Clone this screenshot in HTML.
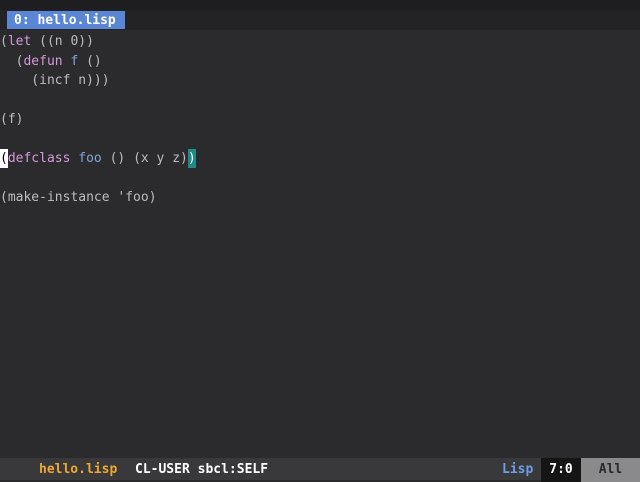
<!DOCTYPE html><html><head><style>
body{margin:0;width:640px;height:480px;background:#2b2a2d;overflow:hidden;font-family:"DejaVu Sans Mono","Liberation Mono",monospace;font-size:13px;color:#bdbdbd;position:relative}
.top{position:absolute;top:0;left:0;width:640px;height:10px;background:#1e1e20}
.tabs{position:absolute;top:10px;left:0;width:640px;height:20px;background:#232325}
.tab{position:absolute;left:7px;top:1px;width:118px;height:18px;background:#5a86d6;color:#fff;font-weight:bold;line-height:20px;padding-left:7px;box-sizing:border-box}
pre{position:absolute;top:32px;left:0;margin:0;font:inherit;line-height:19.5px}
.k{color:#d49ad8}.f{color:#7fa7d8}
.cur{background:#fff;color:#000;display:inline-block;height:19px;vertical-align:top}.m{background:#1f8a86;color:#fff;display:inline-block;height:19px;vertical-align:top}
.st{position:absolute;top:458px;left:0;width:640px;height:22px;background:#39383b;line-height:24px;font-weight:bold;color:#fff}
</style></head><body>
<div class="top"></div>
<div class="tabs"><div class="tab">0: hello.lisp</div></div>
<pre>(<span class="k">let</span> ((n 0))
  (<span class="k">defun</span> <span class="f">f</span> ()
    (incf n)))

(f)

<span class="cur">(</span><span class="k">defclass</span> <span class="f">foo</span> () (x y z)<span class="m">)</span>

(make-instance 'foo)</pre>
<div class="st"><span style="position:absolute;left:39px;color:#f0a830">hello.lisp</span><span style="position:absolute;left:135px">CL-USER sbcl:SELF</span><span style="position:absolute;left:502px;color:#6f9fe8">Lisp</span><span style="position:absolute;left:541px;width:40px;background:#151515;text-align:center">7:0</span><span style="position:absolute;left:581px;width:59px;background:#8a8a8c;color:#2a2a2a;text-align:center">All</span></div>
</body></html>
